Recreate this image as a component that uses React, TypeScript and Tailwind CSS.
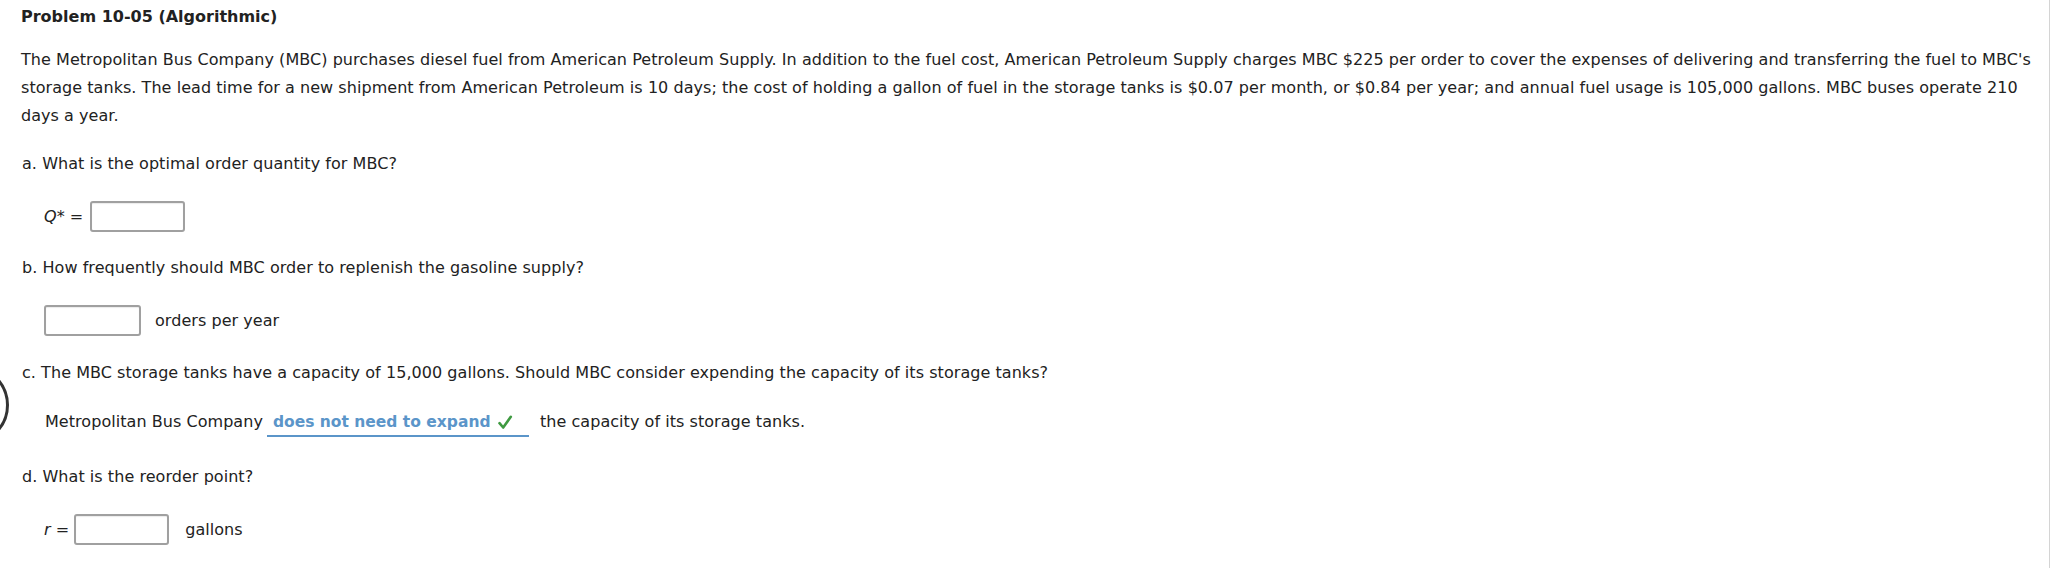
import React from "react";

function AnswerBox({ w = "w-[95px]" }: { w?: string }) {
  return (
    <span
      className={`inline-block h-[31px] ${w} rounded-[3px] border-2 border-[#a0a0a0] bg-white shadow-[inset_0_1px_1px_rgba(0,0,0,0.08)]`}
    />
  );
}

function Check() {
  return (
    <svg width="16" height="16" viewBox="0 0 16 16" className="ml-[6px]">
      <path
        d="M2.5 9.2 L6.2 13.5 L13.8 2.8"
        fill="none"
        stroke="#3f9a41"
        strokeWidth="2.6"
        strokeLinecap="round"
        strokeLinejoin="round"
      />
    </svg>
  );
}

export default function App() {
  return (
    <div className="relative h-[568px] w-[2052px] overflow-hidden bg-white">
      {/* partial focus ring at the left edge */}
      <div className="pointer-events-none absolute left-[-71px] top-[365px] h-[80px] w-[80px] rounded-full border-[3px] border-[#333]" />

      <div className="flex h-full w-[2050px] flex-col border-r border-[#d4d4d4] pl-[21px] pr-[12px] pt-[7px] font-['DejaVu_Sans','Verdana',sans-serif] text-[16px] tracking-[0.05px] text-[#222]">
        <h1 className="text-[16px] font-bold leading-[20px] tracking-normal text-[#222]">
          Problem 10-05 (Algorithmic)
        </h1>

        <p className="mt-[19px] leading-[28px]">
          The Metropolitan Bus Company (MBC) purchases diesel fuel from American
          Petroleum Supply. In addition to the fuel cost, American Petroleum
          Supply charges MBC $225 per order to cover the expenses of delivering
          and transferring the fuel to MBC's storage tanks. The lead time for a
          new shipment from American Petroleum is 10 days; the cost of holding a
          gallon of fuel in the storage tanks is $0.07 per month, or $0.84 per
          year; and annual fuel usage is 105,000 gallons. MBC buses operate 210
          days a year.
        </p>

        {/* a */}
        <p className="mt-[20px] pl-[1px] leading-[28px]">
          a. What is the optimal order quantity for MBC?
        </p>
        <div className="mt-[23px] flex items-center pl-[23px]">
          <span className="mr-[7px]">
            <i>Q</i>* =
          </span>
          <AnswerBox />
        </div>

        {/* b */}
        <p className="mt-[22px] pl-[1px] leading-[28px]">
          b. How frequently should MBC order to replenish the gasoline supply?
        </p>
        <div className="mt-[23px] flex items-center gap-[14px] pl-[23px]">
          <AnswerBox w="w-[97px]" />
          <span>orders per year</span>
        </div>

        {/* c */}
        <p className="mt-[23px] pl-[1px] leading-[28px]">
          c. The MBC storage tanks have a capacity of 15,000 gallons. Should MBC
          consider expending the capacity of its storage tanks?
        </p>
        <div className="mt-[20px] flex items-center pl-[24px] leading-[28px]">
          <span>Metropolitan Bus Company</span>
          <span className="ml-[4px] inline-flex h-[30px] w-[262px] items-center border-b-2 border-[#5b95c9] pl-[6px] pt-[2px] text-[15.5px] font-bold tracking-normal text-[#5b95c9]">
            does not need to expand
            <Check />
          </span>
          <span className="ml-[11px]">the capacity of its storage tanks.</span>
        </div>

        {/* d */}
        <p className="mt-[26px] pl-[1px] leading-[28px]">
          d. What is the reorder point?
        </p>
        <div className="mt-[23px] flex items-center pl-[23px]">
          <span className="mr-[5px]">
            <i>r</i> =
          </span>
          <AnswerBox />
          <span className="ml-[16px]">gallons</span>
        </div>
      </div>
    </div>
  );
}
